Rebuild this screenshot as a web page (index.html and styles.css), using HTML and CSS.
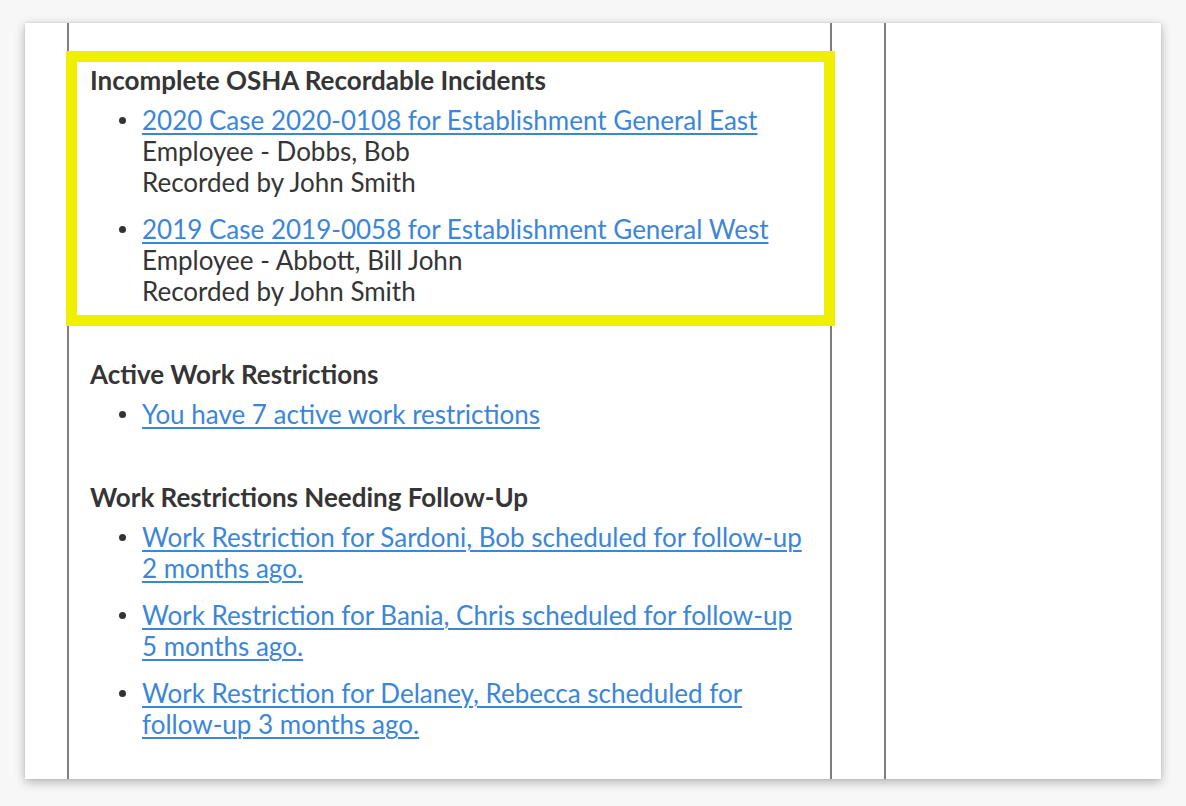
FILE: index.html
```html
<!DOCTYPE html>
<html lang="en">
<head>
<meta charset="utf-8">
<title>Dashboard</title>
<link rel="stylesheet" href="styles.css">
</head>
<body>
<div class="frame">
  <div class="panel">
    <div class="gutter"></div>
    <div class="main">
      <section class="block highlight">
        <h3 class="block-title">Incomplete OSHA Recordable Incidents</h3>
        <ul class="items">
          <li>
            <a href="#">2020 Case 2020-0108 for Establishment General East</a><br>
            Employee - Dobbs, Bob<br>
            Recorded by John Smith
          </li>
          <li>
            <a href="#">2019 Case 2019-0058 for Establishment General West</a><br>
            Employee - Abbott, Bill John<br>
            Recorded by John Smith
          </li>
        </ul>
      </section>
      <section class="block">
        <h3 class="block-title">Active Work Restrictions</h3>
        <ul class="items">
          <li><a href="#">You have 7 active work restrictions</a></li>
        </ul>
      </section>
      <section class="block">
        <h3 class="block-title">Work Restrictions Needing Follow-Up</h3>
        <ul class="items">
          <li><a href="#">Work Restriction for Sardoni, Bob scheduled for follow-up 2 months ago.</a></li>
          <li><a href="#">Work Restriction for Bania, Chris scheduled for follow-up 5 months ago.</a></li>
          <li><a href="#">Work Restriction for Delaney, Rebecca scheduled for follow-up 3 months ago.</a></li>
        </ul>
      </section>
    </div>
    <div class="spacer"></div>
    <div class="side"></div>
  </div>
</div>
</body>
</html>
```

FILE: styles.css
```css
html, body {
  margin: 0;
  padding: 0;
  background: #f7f7f7;
}

body {
  font-family: Lato, "Open Sans", Arial, sans-serif;
  color: #353535;
}

.frame {
  padding: 23px 25px 27px 25px;
  height: 806px;
  box-sizing: border-box;
}

.panel {
  display: flex;
  width: 1136px;
  height: 756px;
  background: #ffffff;
  box-shadow: 0 3px 10px rgba(0, 0, 0, 0.28), 0 0 2px rgba(0, 0, 0, 0.12);
}

.gutter {
  width: 42px;
  flex: none;
}

.main {
  width: 761px;
  flex: none;
  border-left: 2px solid #7e7e7e;
  border-right: 2px solid #7e7e7e;
  padding-top: 28px;
}

.spacer {
  width: 52px;
  flex: none;
  border-right: 2px solid #7e7e7e;
}

.side {
  flex: 1;
}

.block {
  border: 11px solid transparent;
  margin: 0 -5px 19px -3px;
  padding: 4px 13px 8px 13px;
}

.highlight {
  border-color: #eef000;
  background: #ffffff;
}

.block-title {
  margin: 0 0 11px 0;
  font-size: 26px;
  line-height: 28px;
  font-weight: 700;
  color: #353535;
}

.items {
  list-style: none;
  margin: 0;
  padding: 0 0 0 52px;
  font-size: 26px;
  line-height: 31px;
}

.items li {
  position: relative;
}

.items li + li {
  margin-top: 16px;
}

.items li::before {
  content: "";
  position: absolute;
  left: -23px;
  top: 12px;
  width: 7px;
  height: 7px;
  border-radius: 50%;
  background: #333333;
}

.items a {
  color: #3b86d8;
  text-decoration: underline;
  text-decoration-thickness: 1.5px;
  text-underline-offset: 3px;
}
```
